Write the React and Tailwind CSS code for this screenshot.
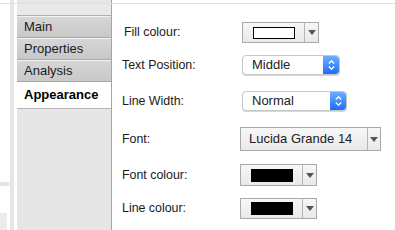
import React from 'react'

const font = { fontFamily: '"Liberation Sans", Arial, sans-serif' }

const tabs = ['Main', 'Properties', 'Analysis']

function Arrow() {
  return (
    <svg width="8" height="5" viewBox="0 0 8 5">
      <path d="M0 0 L8 0 L4 5 Z" fill="#555" />
    </svg>
  )
}

function SwatchButton({ color, width, swatchClass }) {
  return (
    <div className={`flex h-full ${width} border border-[#a9a9a9] bg-gradient-to-b from-[#f7f7f7] to-[#e9e9e9]`}>
      <div className="flex flex-1 items-center justify-center">
        <div className={`${swatchClass} border border-black`} style={{ background: color }} />
      </div>
      <div className="flex w-[14px] items-center justify-center border-l border-[#b5b5b5]">
        <Arrow />
      </div>
    </div>
  )
}

function Stepper() {
  return (
    <div className="flex w-[16px] flex-col items-center justify-center gap-[2px] rounded-r-[4px] bg-gradient-to-b from-[#6aaeff] to-[#1f6cf8]">
      <svg width="7" height="4" viewBox="0 0 7 4">
        <path d="M0.8 3.5 L3.5 0.8 L6.2 3.5" stroke="#fff" strokeWidth="1.3" fill="none" />
      </svg>
      <svg width="7" height="4" viewBox="0 0 7 4">
        <path d="M0.8 0.5 L3.5 3.2 L6.2 0.5" stroke="#fff" strokeWidth="1.3" fill="none" />
      </svg>
    </div>
  )
}

function Select({ value, width }) {
  return (
    <div className={`flex h-full ${width} rounded-[4px] border border-[#c6c6c6] bg-white shadow-[0_1px_0_#d8d8d8]`}>
      <div className="flex flex-1 items-center pl-[9px] text-[13px] text-[#222]">{value}</div>
      <Stepper />
    </div>
  )
}

function Row({ label, className, labelClass = '', children }) {
  return (
    <div className={`flex items-center ${className}`}>
      <div className={`w-[118px] text-[12.4px] text-[#1a1a1a] ${labelClass}`}>{label}</div>
      <div className="flex h-full">{children}</div>
    </div>
  )
}

export default function App() {
  return (
    <div className="relative flex h-[230px] w-[395px] overflow-hidden bg-white" style={font}>
      <div className="absolute left-0 right-0 top-[3px] h-px bg-[#d3e4f6]" />

      {/* left window edge */}
      <div className="flex w-[17px] shrink-0">
        <div className="flex w-[10px] flex-col">
          <div className="h-[182px]" />
          <div className="h-[4px] rounded-r-[3px] bg-[#e6e6e6]" />
          <div className="h-[27px]" />
          <div className="w-[7px] flex-1 bg-[#ececec]" />
        </div>
        <div className="w-[4px] bg-[#e6e6e6]" />
      </div>

      {/* sidebar */}
      <div className="flex w-[95px] shrink-0 flex-col border-r border-[#a5a5a5] bg-[#e6e6e6] pt-[4px]">
        <div className="h-[12px] border-b border-[#b0b0b0] bg-[#e9e9e9]" />
        {tabs.map(t => (
          <div
            key={t}
            className="flex h-[22px] items-center border-b border-[#a8a8a8] border-t border-t-[#f2f2f2] bg-gradient-to-b from-[#d6d6d6] to-[#c8c8c8] pl-[7px] text-[13px] text-[#1a1a1a]"
          >
            {t}
          </div>
        ))}
        <div className="flex h-[27px] items-center border-b border-[#b5b5b5] bg-white pl-[7px] text-[13px] font-bold text-black">
          Appearance
        </div>
        <div className="flex-1" />
      </div>

      {/* content */}
      <div className="flex flex-1 flex-col pl-[10px]">
        <Row label="Fill colour:" className="mt-[22px] h-[21px]" labelClass="pl-[2px]">
          <div className="ml-[2px] h-full">
            <SwatchButton color="#fff" width="w-[77px]" swatchClass="h-[12px] w-[42px]" />
          </div>
        </Row>
        <Row label="Text Position:" className="mt-[12px] h-[20px]">
          <div className="ml-[2px] h-full">
            <Select value="Middle" width="w-[98px]" />
          </div>
        </Row>
        <Row label="Line Width:" className="mt-[16px] h-[20px]">
          <div className="ml-[2px] h-full">
            <Select value="Normal" width="w-[105px]" />
          </div>
        </Row>
        <Row label="Font:" className="mt-[16px] h-[24px]">
          <div className="flex h-full w-[141px] border border-[#a9a9a9] bg-gradient-to-b from-[#f7f7f7] to-[#e9e9e9]">
            <div className="flex flex-1 items-center pl-[8px] text-[13px] text-[#222]">Lucida Grande 14</div>
            <div className="flex w-[13px] items-center justify-center border-l border-[#b5b5b5]">
              <Arrow />
            </div>
          </div>
        </Row>
        <Row label="Font colour:" className="mt-[13px] h-[22px]">
          <SwatchButton color="#000" width="w-[77px]" swatchClass="h-[13px] w-[42px]" />
        </Row>
        <Row label="Line colour:" className="mt-[12px] h-[21px]">
          <SwatchButton color="#000" width="w-[77px]" swatchClass="h-[13px] w-[42px]" />
        </Row>
      </div>
    </div>
  )
}
